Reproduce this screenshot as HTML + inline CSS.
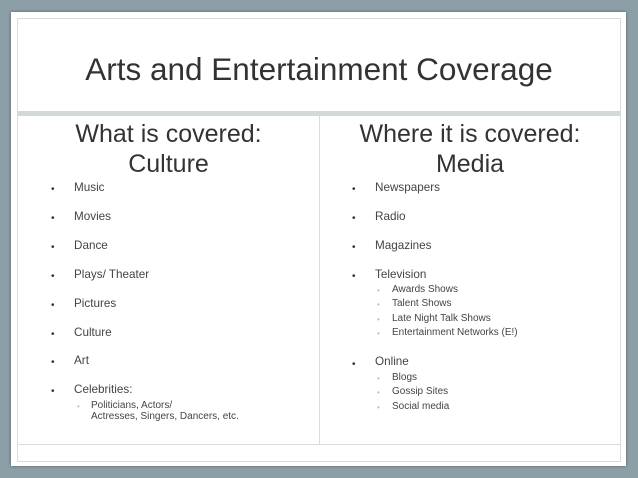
<!DOCTYPE html>
<html><head><style>
*{margin:0;padding:0}
body{width:638px;height:478px;background:#8c9ea6;position:relative;overflow:hidden;font-family:"Liberation Sans",Arial,sans-serif;color:#333}
.slide{position:absolute;left:11px;top:12px;width:615px;height:454px;background:#fff;box-shadow:0 0 3px rgba(0,0,0,.4)}
.inner{position:absolute;left:17px;top:18px;width:602px;height:442px;border:1px solid #d8dcdc}
.band{position:absolute;left:18px;top:111px;width:602px;height:5px;background:#d3d9db}
.vline{position:absolute;left:319px;top:116px;width:1px;height:329px;background:#d8dcdc}
.hline{position:absolute;left:18px;top:444px;width:602px;height:1px;background:#d8dcdc}
.t{position:absolute;white-space:nowrap}
.title{left:0;width:638px;text-align:center;top:51px;font-size:31.5px;color:#333}
.h{text-align:center;font-size:25px;line-height:30px;color:#333}
.i{font-size:11.7px;color:#444}
.s{font-size:10px;color:#444}
.b{font-size:10px}
.sb{font-size:8px;color:#bbb}
</style></head><body>
<div class="slide"></div>
<div class="inner"></div>
<div class="band"></div>
<div class="vline"></div>
<div class="hline"></div>
<div class="t title">Arts and Entertainment Coverage</div>
<div class="t h" style="left:18px;width:301px;top:119px">What is covered:<br>Culture</div>
<div class="t h" style="left:320px;width:300px;top:119px">Where it is covered:<br>Media</div>

<div class="t b" style="left:51px;top:184px">•</div><div class="t i" style="left:74px;top:181px">Music</div>
<div class="t b" style="left:51px;top:213px">•</div><div class="t i" style="left:74px;top:210px">Movies</div>
<div class="t b" style="left:51px;top:242px">•</div><div class="t i" style="left:74px;top:239px">Dance</div>
<div class="t b" style="left:51px;top:271px">•</div><div class="t i" style="left:74px;top:268px">Plays/ Theater</div>
<div class="t b" style="left:51px;top:300px">•</div><div class="t i" style="left:74px;top:297px">Pictures</div>
<div class="t b" style="left:51px;top:329px">•</div><div class="t i" style="left:74px;top:326px">Culture</div>
<div class="t b" style="left:51px;top:357px">•</div><div class="t i" style="left:74px;top:354px">Art</div>
<div class="t b" style="left:51px;top:386px">•</div><div class="t i" style="left:74px;top:383px">Celebrities:</div>
<div class="t sb" style="left:77px;top:402px">•</div><div class="t s" style="left:91px;top:400px;line-height:11px">Politicians, Actors/<br>Actresses, Singers, Dancers, etc.</div>

<div class="t b" style="left:352px;top:184px">•</div><div class="t i" style="left:375px;top:181px">Newspapers</div>
<div class="t b" style="left:352px;top:213px">•</div><div class="t i" style="left:375px;top:210px">Radio</div>
<div class="t b" style="left:352px;top:242px">•</div><div class="t i" style="left:375px;top:239px">Magazines</div>
<div class="t b" style="left:352px;top:271px">•</div><div class="t i" style="left:375px;top:268px">Television</div>
<div class="t sb" style="left:377px;top:286px">•</div><div class="t s" style="left:392px;top:284px">Awards Shows</div>
<div class="t sb" style="left:377px;top:300px">•</div><div class="t s" style="left:392px;top:298px">Talent Shows</div>
<div class="t sb" style="left:377px;top:315px">•</div><div class="t s" style="left:392px;top:313px">Late Night Talk Shows</div>
<div class="t sb" style="left:377px;top:329px">•</div><div class="t s" style="left:392px;top:327px">Entertainment Networks (E!)</div>
<div class="t b" style="left:352px;top:359px">•</div><div class="t i" style="left:375px;top:355px">Online</div>
<div class="t sb" style="left:377px;top:374px">•</div><div class="t s" style="left:392px;top:372px">Blogs</div>
<div class="t sb" style="left:377px;top:388px">•</div><div class="t s" style="left:392px;top:386px">Gossip Sites</div>
<div class="t sb" style="left:377px;top:403px">•</div><div class="t s" style="left:392px;top:401px">Social media</div>
</body></html>
